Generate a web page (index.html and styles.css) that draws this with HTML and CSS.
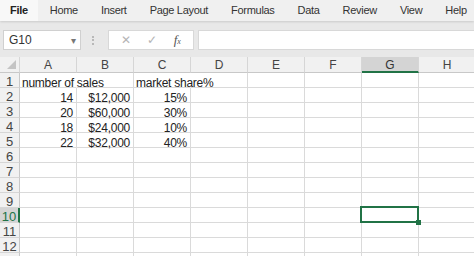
FILE: index.html
```html
<html>
  <head>
    <title>Sheet1</title>
    <meta charset="utf-8" />
    <link rel="stylesheet" href="styles.css">
  </head>
  <body>
    <div class="tabs">
      <span class="tab tab-file">File</span>
      <span class="tab">Home</span>
      <span class="tab">Insert</span>
      <span class="tab">Page Layout</span>
      <span class="tab">Formulas</span>
      <span class="tab">Data</span>
      <span class="tab">Review</span>
      <span class="tab">View</span>
      <span class="tab">Help</span>
    </div>

    <div class="fbar">
      <div class="namebox">
        <span>G10</span>
        <span class="caret">&#9662;</span>
      </div>
      <div class="grip"></div>
      <div class="fbtns">
        <span class="fbtn">&#10005;</span>
        <span class="fbtn">&#10003;</span>
        <span class="fbtn fx">f<small>x</small></span>
      </div>
      <div class="finput"></div>
    </div>

    <div class="sheet">
      <!-- 列标题 -->
      <div class="hd corner"></div>
      <div class="hd">A</div><div class="hd">B</div><div class="hd">C</div><div class="hd">D</div>
      <div class="hd">E</div><div class="hd">F</div><div class="hd hd-sel">G</div><div class="hd">H</div>

      <div class="rh">1</div>
      <div class="c c-over">number of sales</div><div class="c"></div><div class="c c-over">market share%</div><div class="c"></div>
      <div class="c"></div><div class="c"></div><div class="c"></div><div class="c"></div>

      <div class="rh">2</div>
      <div class="c num">14</div><div class="c num">$12,000</div><div class="c num">15%</div><div class="c"></div>
      <div class="c"></div><div class="c"></div><div class="c"></div><div class="c"></div>

      <div class="rh">3</div>
      <div class="c num">20</div><div class="c num">$60,000</div><div class="c num">30%</div><div class="c"></div>
      <div class="c"></div><div class="c"></div><div class="c"></div><div class="c"></div>

      <div class="rh">4</div>
      <div class="c num">18</div><div class="c num">$24,000</div><div class="c num">10%</div><div class="c"></div>
      <div class="c"></div><div class="c"></div><div class="c"></div><div class="c"></div>

      <div class="rh">5</div>
      <div class="c num">22</div><div class="c num">$32,000</div><div class="c num">40%</div><div class="c"></div>
      <div class="c"></div><div class="c"></div><div class="c"></div><div class="c"></div>

      <div class="rh">6</div>
      <div class="c"></div><div class="c"></div><div class="c"></div><div class="c"></div>
      <div class="c"></div><div class="c"></div><div class="c"></div><div class="c"></div>

      <div class="rh">7</div>
      <div class="c"></div><div class="c"></div><div class="c"></div><div class="c"></div>
      <div class="c"></div><div class="c"></div><div class="c"></div><div class="c"></div>

      <div class="rh">8</div>
      <div class="c"></div><div class="c"></div><div class="c"></div><div class="c"></div>
      <div class="c"></div><div class="c"></div><div class="c"></div><div class="c"></div>

      <div class="rh">9</div>
      <div class="c"></div><div class="c"></div><div class="c"></div><div class="c"></div>
      <div class="c"></div><div class="c"></div><div class="c"></div><div class="c"></div>

      <div class="rh rh-sel">10</div>
      <div class="c"></div><div class="c"></div><div class="c"></div><div class="c"></div>
      <div class="c"></div><div class="c"></div><div class="c c-sel"></div><div class="c"></div>

      <div class="rh">11</div>
      <div class="c"></div><div class="c"></div><div class="c"></div><div class="c"></div>
      <div class="c"></div><div class="c"></div><div class="c"></div><div class="c"></div>

      <div class="rh">12</div>
      <div class="c"></div><div class="c"></div><div class="c"></div><div class="c"></div>
      <div class="c"></div><div class="c"></div><div class="c"></div><div class="c"></div>

      <div class="rh"></div>
      <div class="c"></div><div class="c"></div><div class="c"></div><div class="c"></div>
      <div class="c"></div><div class="c"></div><div class="c"></div><div class="c"></div>
    </div>
  </body>
</html>
```

FILE: styles.css
```css
  html, body {
    width: 100%;
    height: 100%;
    margin: 0px;
    overflow: hidden;
    background-color: #e8e8e8;
    font-family: "Liberation Sans", Arial, sans-serif;
  }

  /* 选项卡 */
  .tabs {
    display: flex;
    height: 21px;
    background-color: #f0f0f0;
    box-shadow: 0 1px 2px rgba(0, 0, 0, 0.12);
    font-size: 11px;
    letter-spacing: -0.3px;
    color: #333;
    line-height: 20px;
    white-space: nowrap;
  }

  .tab {
    padding: 0 11.5px;
  }

  .tab-file {
    padding: 0 10.5px 0 10px;
    font-weight: bold;
    color: #222;
    background-color: #f8f8f8;
  }

  /* 编辑栏 */
  .fbar {
    display: flex;
    align-items: center;
    height: 20px;
    padding: 9px 0 7px 3px;
  }

  .namebox {
    display: flex;
    justify-content: space-between;
    align-items: center;
    box-sizing: border-box;
    width: 78px;
    height: 20px;
    padding: 0 4px 0 5px;
    background-color: #fff;
    border: 1px solid #d0d0d0;
    font-size: 12px;
    color: #333;
  }

  .caret {
    font-size: 10px;
    color: #777;
  }

  .grip {
    width: 2px;
    height: 9px;
    margin: 0 12px 0 11px;
    border-left: 2px dotted #b8b8b8;
  }

  .fbtns {
    display: flex;
    align-items: center;
    justify-content: space-around;
    box-sizing: border-box;
    width: 86px;
    height: 20px;
    padding: 0 4px;
    background-color: #fff;
    border: 1px solid #d8d8d8;
    color: #b5b5b5;
    font-size: 12px;
  }

  .fx {
    color: #555;
    font-family: "Liberation Serif", serif;
    font-style: italic;
    font-size: 13px;
  }

  .fx small {
    font-size: 8px;
  }

  .finput {
    flex: 1;
    height: 20px;
    margin-left: 4px;
    box-sizing: border-box;
    background-color: #fff;
    border: 1px solid #d8d8d8;
    border-right: none;
  }

  /* 表格 */
  .sheet {
    display: grid;
    grid-template-columns: 20px repeat(8, 57px);
    grid-template-rows: 16px;
    grid-auto-rows: 15px;
    background-color: #fff;
    font-size: 12px;
    letter-spacing: -0.25px;
    color: #222;
  }

  .hd {
    box-sizing: border-box;
    background-color: #f1f1f1;
    border-right: 1px solid #d6d6d6;
    border-bottom: 1px solid #c8c8c8;
    text-align: center;
    line-height: 17px;
    color: #444;
    letter-spacing: 0;
  }

  .corner {
    position: relative;
  }

  .corner::after {
    content: "";
    position: absolute;
    right: 3px;
    bottom: 3px;
    border-left: 9px solid transparent;
    border-bottom: 9px solid #c4c4c4;
  }

  .hd-sel {
    background-color: #d4d4d4;
    color: #333;
    border-bottom: 2px solid #217346;
  }

  .rh {
    box-sizing: border-box;
    background-color: #f1f1f1;
    border-right: 1px solid #c8c8c8;
    border-bottom: 1px solid #d6d6d6;
    text-align: center;
    font-size: 13px;
    line-height: 14px;
    padding-top: 2px;
    color: #444;
    letter-spacing: 0;
  }

  .rh-sel {
    background-color: #d4d4d4;
    color: #217346;
    border-right: 2px solid #217346;
  }

  .c {
    box-sizing: border-box;
    border-right: 1px solid #dadada;
    border-bottom: 1px solid #dadada;
    line-height: 14px;
    padding: 3px 3px 0 2px;
    white-space: nowrap;
    overflow: visible;
  }

  .c-over {
    border-right-color: transparent;
    position: relative;
    z-index: 1;
  }

  .num {
    text-align: right;
  }

  .c-sel {
    position: relative;
  }

  .c-sel::after {
    content: "";
    position: absolute;
    left: -2px;
    top: -2px;
    right: -1px;
    bottom: -1px;
    border: 2px solid #217346;
  }

  .c-sel::before {
    content: "";
    position: absolute;
    right: -3px;
    bottom: -3px;
    width: 5px;
    height: 5px;
    background-color: #217346;
    z-index: 1;
  }
```
